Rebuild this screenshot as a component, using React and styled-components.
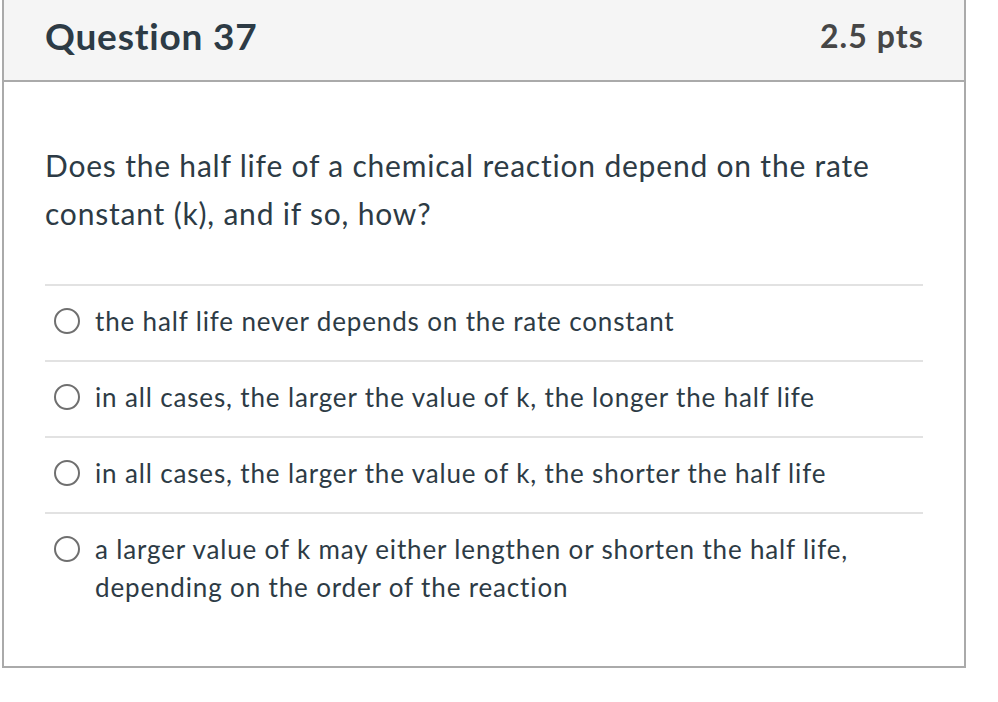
import React from 'react'
import styled, { createGlobalStyle } from 'styled-components'

const GlobalStyle = createGlobalStyle`
  body {
    margin: 0;
    background: #ffffff;
    font-family: Lato, "Open Sans", Arial, sans-serif;
    color: #2d3b45;
  }
`;

const Card = styled.div`
  box-sizing: border-box;
  width: 964px;
  margin-left: 2px;
  border: 2px solid #aaaaaa;
  border-top: none;
  background: #ffffff;
`;

const Header = styled.div`
  box-sizing: border-box;
  height: 82px;
  display: flex;
  align-items: center;
  justify-content: space-between;
  padding: 0 40px 9px 41px;
  background: #f5f5f5;
  border-bottom: 2px solid #aaaaaa;
`;

const Title = styled.h2`
  margin: 0;
  font-size: 37px;
  letter-spacing: 0.8px;
  font-weight: 700;
  color: #2d3b45;
`;

const Points = styled.div`
  font-size: 32px;
  letter-spacing: 1.1px;
  font-weight: 700;
  color: #464646;
`;

const Body = styled.div`
  padding: 59px 41px 40px 41px;
`;

const QuestionText = styled.p`
  margin: 0 0 47px 0;
  font-size: 30px;
  letter-spacing: 0.8px;
  line-height: 48px;
`;

const Answers = styled.div`
  display: flex;
  flex-direction: column;
`;

const Answer = styled.label`
  display: flex;
  align-items: flex-start;
  gap: 15px;
  padding: 16px 0 20px 9px;
  border-top: 2px solid #e2e2e2;
`;

const Radio = styled.span`
  box-sizing: border-box;
  flex: none;
  width: 26px;
  height: 26px;
  margin-top: 6px;
  border: 2px solid #6f6f6f;
  border-radius: 50%;
  background: #fff;
`;

const AnswerText = styled.span`
  font-size: 26px;
  letter-spacing: 0.85px;
  line-height: 38px;
`;

const answers = [
  'the half life never depends on the rate constant',
  'in all cases, the larger the value of k, the longer the half life',
  'in all cases, the larger the value of k, the shorter the half life',
  'a larger value of k may either lengthen or shorten the half life, depending on the order of the reaction',
];

const App = () => {
  return (
    <>
      <GlobalStyle />
      <Card>
        <Header>
          <Title>Question 37</Title>
          <Points>2.5 pts</Points>
        </Header>
        <Body>
          <QuestionText>
            Does the half life of a chemical reaction depend on the rate constant (k), and if so, how?
          </QuestionText>
          <Answers>
            {answers.map((a) => (
              <Answer key={a}>
                <Radio />
                <AnswerText>{a}</AnswerText>
              </Answer>
            ))}
          </Answers>
        </Body>
      </Card>
    </>
  )
}

export default App
